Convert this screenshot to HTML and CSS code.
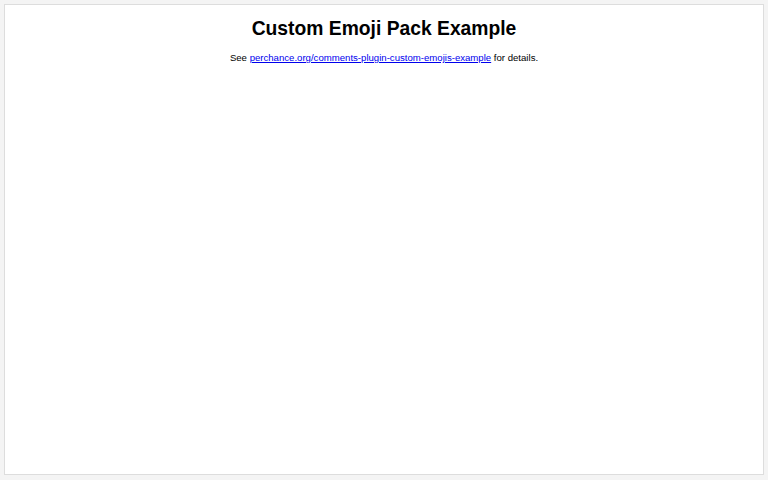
FILE: index.html
```html
<!DOCTYPE html>
<html lang="en">
<head>
    <meta charset="UTF-8">
    <meta name="viewport" content="width=device-width, initial-scale=1.0">
    <title>Custom Emoji Pack Example</title>
    <link rel="stylesheet" href="styles.css">
</head>
<body>
    <div class="page">
        <h1>Custom Emoji Pack Example</h1>
        <p class="note">See <a href="#">perchance.org/comments-plugin-custom-emojis-example</a> for details.</p>
    </div>
</body>
</html>
```

FILE: styles.css
```css
html, body {
    height: 100%;
}

body {
    margin: 0;
    padding: 4px 4px 5px 4px;
    box-sizing: border-box;
    background-color: #f4f4f4;
    font-family: "Liberation Sans", Arial, sans-serif;
    color: #000000;
}

.page {
    height: 100%;
    box-sizing: border-box;
    background-color: #ffffff;
    border: 1px solid #dddddd;
    text-align: center;
}

h1 {
    margin: 13px 0 0 0;
    font-size: 19.3px;
    font-weight: bold;
}

.note {
    margin: 12px 0 0 0;
    font-size: 9.6px;
}

.note a {
    color: #0000ee;
}
```
